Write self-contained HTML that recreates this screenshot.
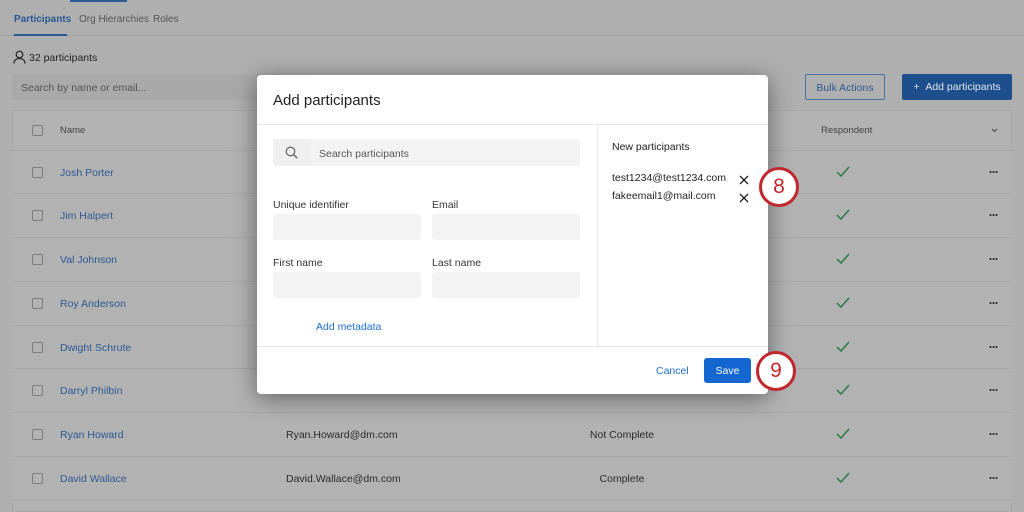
<!DOCTYPE html>
<html><head><style>
*{box-sizing:border-box;margin:0;padding:0}
body{width:1024px;height:512px;overflow:hidden;background:#afafaf;font-family:"Liberation Sans",sans-serif;position:relative;color:#1f1f1f}
.a{position:absolute}
.t{font-size:10.5px;white-space:nowrap}
.row{position:absolute;left:12px;width:1000px;height:44px;border-top:1px solid #a6a6a6;background:#b2b2b2}
.cb{position:absolute;left:20px;top:16px;width:11px;height:11px;border:1px solid #7c7c7c;border-radius:2px}
.nm{position:absolute;left:48px;top:16px;font-size:10.5px;color:#2c5a92}
.em{position:absolute;left:274px;top:16px;font-size:10.5px;color:#2a2a2a}
.st{position:absolute;left:520px;width:180px;text-align:center;top:16px;font-size:10.5px;color:#2a2a2a}
.ck{position:absolute;left:824px;top:15px}
.dots{position:absolute;left:977px;top:20px;width:9px;height:2px;background:radial-gradient(circle,#222 0.9px,transparent 1.1px) 0 0/3px 2px repeat-x}
.inp{position:absolute;background:#f3f3f3;border-radius:3px}
.lbl{position:absolute;font-size:10.5px;color:#333}
.circ{position:absolute;width:40px;height:40px;border-radius:50%;border:3px solid #c1272d;background:#fff;font-size:21px;color:#c1272d;text-align:center;line-height:34px}
</style></head><body>
<div class="a" style="left:0;top:0;width:1024px;height:36px;border-bottom:1px solid #9d9d9d"></div>
<div class="a" style="left:70px;top:0;width:57px;height:2px;background:#2a5a95"></div>
<div class="a t" style="left:14px;top:14px;font-weight:bold;color:#2c5a92;font-size:10px">Participants</div>
<div class="a" style="left:14px;top:34px;width:53px;height:2px;background:#2a5a95"></div>
<div class="a t" style="left:79px;top:14px;color:#555;font-size:10px">Org Hierarchies</div>
<div class="a t" style="left:153px;top:14px;color:#555;font-size:10px">Roles</div>
<svg class="a" style="left:13px;top:50px" width="13" height="14" viewBox="0 0 13 14"><circle cx="6.5" cy="4.5" r="3.3" fill="none" stroke="#222" stroke-width="1.2"/><path d="M1 13.5c0-3.5 2.5-5 5.5-5s5.5 1.5 5.5 5" fill="none" stroke="#222" stroke-width="1.2"/></svg>
<div class="a t" style="left:29px;top:52px;color:#222">32 participants</div>
<div class="a" style="left:12px;top:74px;width:300px;height:26px;background:#a9a9a9"></div>
<div class="a t" style="left:21px;top:82px;color:#555">Search by name or email...</div>
<div class="a" style="left:805px;top:74px;width:80px;height:26px;border:1px solid #4a72a4;border-radius:2px;font-size:10.5px;color:#2c5a92;text-align:center;line-height:26px">Bulk Actions</div>
<div class="a" style="left:902px;top:74px;width:110px;height:26px;background:#1d4f8c;border-radius:2px;font-size:10.5px;color:#dfe6ef;text-align:center;line-height:27px">+&nbsp;&nbsp;Add participants</div>
<div class="a" style="left:12px;top:110px;width:1000px;height:402px;background:#b2b2b2;border:1px solid #a6a6a6"></div>
<div class="cb" style="left:32px;top:125px;position:absolute"></div>
<div class="a t" style="left:60px;top:125px;font-size:9.5px;color:#444">Name</div>
<div class="a t" style="left:821px;top:125px;font-size:9.5px;color:#444">Respondent</div>
<svg class="a" style="left:991px;top:128px" width="7" height="5"><path d="M1 1l2.5 2.5L6 1" fill="none" stroke="#444" stroke-width="1"/></svg>
<div class="row" style="top:150px"><div class="cb"></div><div class="nm">Josh Porter</div><svg class="ck" width="14" height="12"><path d="M1 6l4 4 8-9" fill="none" stroke="#2b7a47" stroke-width="1.5"/></svg><div class="dots"></div></div>
<div class="row" style="top:193px"><div class="cb"></div><div class="nm">Jim Halpert</div><svg class="ck" width="14" height="12"><path d="M1 6l4 4 8-9" fill="none" stroke="#2b7a47" stroke-width="1.5"/></svg><div class="dots"></div></div>
<div class="row" style="top:237px"><div class="cb"></div><div class="nm">Val Johnson</div><svg class="ck" width="14" height="12"><path d="M1 6l4 4 8-9" fill="none" stroke="#2b7a47" stroke-width="1.5"/></svg><div class="dots"></div></div>
<div class="row" style="top:281px"><div class="cb"></div><div class="nm">Roy Anderson</div><svg class="ck" width="14" height="12"><path d="M1 6l4 4 8-9" fill="none" stroke="#2b7a47" stroke-width="1.5"/></svg><div class="dots"></div></div>
<div class="row" style="top:325px"><div class="cb"></div><div class="nm">Dwight Schrute</div><svg class="ck" width="14" height="12"><path d="M1 6l4 4 8-9" fill="none" stroke="#2b7a47" stroke-width="1.5"/></svg><div class="dots"></div></div>
<div class="row" style="top:368px"><div class="cb"></div><div class="nm">Darryl Philbin</div><svg class="ck" width="14" height="12"><path d="M1 6l4 4 8-9" fill="none" stroke="#2b7a47" stroke-width="1.5"/></svg><div class="dots"></div></div>
<div class="row" style="top:412px"><div class="cb"></div><div class="nm">Ryan Howard</div><div class="em">Ryan.Howard@dm.com</div><div class="st">Not Complete</div><svg class="ck" width="14" height="12"><path d="M1 6l4 4 8-9" fill="none" stroke="#2b7a47" stroke-width="1.5"/></svg><div class="dots"></div></div>
<div class="row" style="top:456px"><div class="cb"></div><div class="nm">David Wallace</div><div class="em">David.Wallace@dm.com</div><div class="st">Complete</div><svg class="ck" width="14" height="12"><path d="M1 6l4 4 8-9" fill="none" stroke="#2b7a47" stroke-width="1.5"/></svg><div class="dots"></div></div>
<div class="a" style="left:12px;top:500px;width:1000px;border-top:1px solid #a6a6a6"></div>

<div class="a" style="left:257px;top:75px;width:511px;height:319px;background:#fff;border-radius:4px;box-shadow:0 4px 24px rgba(0,0,0,.45)">
 <div class="a" style="left:16px;top:17px;font-size:15px;color:#222">Add participants</div>
 <div class="a" style="left:0;top:49px;width:511px;border-top:1px solid #e6e6e6"></div>
 <div class="a" style="left:340px;top:49px;height:222px;border-left:1px solid #e6e6e6"></div>
 <div class="a" style="left:0;top:271px;width:511px;border-top:1px solid #e6e6e6"></div>
 <div class="inp" style="left:16px;top:64px;width:307px;height:27px"></div>
 <div class="a" style="left:16px;top:64px;width:38px;height:27px;background:#efefef;border-radius:3px 0 0 3px"></div>
 <svg class="a" style="left:28px;top:71px" width="13" height="13"><circle cx="5.5" cy="5.5" r="4.3" fill="none" stroke="#555" stroke-width="1.1"/><path d="M8.6 8.6l3.6 3.6" stroke="#555" stroke-width="1.2"/></svg>
 <div class="a t" style="left:62px;top:73px;color:#555">Search participants</div>
 <div class="lbl" style="left:16px;top:124px">Unique identifier</div>
 <div class="lbl" style="left:175px;top:124px">Email</div>
 <div class="inp" style="left:16px;top:139px;width:148px;height:26px"></div>
 <div class="inp" style="left:175px;top:139px;width:148px;height:26px"></div>
 <div class="lbl" style="left:16px;top:182px">First name</div>
 <div class="lbl" style="left:175px;top:182px">Last name</div>
 <div class="inp" style="left:16px;top:197px;width:148px;height:26px"></div>
 <div class="inp" style="left:175px;top:197px;width:148px;height:26px"></div>
 <div class="a t" style="left:59px;top:246px;color:#1b6fd1">Add metadata</div>
 <div class="a t" style="left:355px;top:66px;color:#222">New participants</div>
 <div class="a t" style="left:355px;top:97px;color:#222">test1234@test1234.com</div>
 <div class="a t" style="left:355px;top:115px;color:#222">fakeemail1@mail.com</div>
 <svg class="a" style="left:482px;top:100px" width="10" height="10"><path d="M1 1l8 8M9 1l-8 8" stroke="#222" stroke-width="1.3"/></svg>
 <svg class="a" style="left:482px;top:118px" width="10" height="10"><path d="M1 1l8 8M9 1l-8 8" stroke="#222" stroke-width="1.3"/></svg>
 <div class="a t" style="left:399px;top:290px;color:#1b6fd1">Cancel</div>
 <div class="a" style="left:447px;top:283px;width:47px;height:25px;background:#1467d1;border-radius:3px;color:#fff;font-size:10.5px;text-align:center;line-height:26px">Save</div>
</div>
<div class="circ" style="left:759px;top:167px">8</div>
<div class="circ" style="left:756px;top:351px">9</div>
</body></html>
